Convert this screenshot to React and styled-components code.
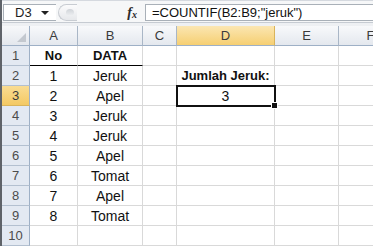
import React from "react";
import styled, { createGlobalStyle, css } from "styled-components";

const GlobalStyle = createGlobalStyle`
  html, body {
    margin: 0;
    padding: 0;
    background: #ffffff;
  }
  body {
    font-family: "Liberation Sans", Arial, sans-serif;
  }
`;

const columns = [
  { key: "A", width: 48 },
  { key: "B", width: 65 },
  { key: "C", width: 34 },
  { key: "D", width: 98 },
  { key: "E", width: 64 },
  { key: "F", width: 64 },
];

const rows = [
  { n: 1, A: "No", B: "DATA", head: true },
  { n: 2, A: "1", B: "Jeruk", D: "Jumlah Jeruk:" },
  { n: 3, A: "2", B: "Apel", D: "3" },
  { n: 4, A: "3", B: "Jeruk" },
  { n: 5, A: "4", B: "Jeruk" },
  { n: 6, A: "5", B: "Apel" },
  { n: 7, A: "6", B: "Tomat" },
  { n: 8, A: "7", B: "Apel" },
  { n: 9, A: "8", B: "Tomat" },
  { n: 10 },
];

function App() {
  return (
    <Window>
      <GlobalStyle />
      <FormulaBar>
        <NameBox>
          <span>D3</span>
          <DropArrow />
        </NameBox>
        <Grabber>
          <GrabDot />
        </Grabber>
        <FxLabel>
          f<small>x</small>
        </FxLabel>
        <FormulaInput>=COUNTIF(B2:B9;"jeruk")</FormulaInput>
      </FormulaBar>

      <Sheet>
        <Corner>
          <CornerTriangle />
        </Corner>
        {columns.map((c) => (
          <ColHeader key={c.key} $active={c.key === "D"}>
            {c.key}
          </ColHeader>
        ))}

        {rows.map((r) => (
          <React.Fragment key={r.n}>
            <RowHeader $active={r.n === 3}>{r.n}</RowHeader>
            {columns.map((c) => {
              const value = r[c.key];
              const selected = r.n === 3 && c.key === "D";
              return (
                <Cell
                  key={c.key}
                  $bold={r.head || (r.n === 2 && c.key === "D")}
                  $underline={r.head && (c.key === "A" || c.key === "B")}
                  $selected={selected}
                >
                  {value}
                  {selected && <FillHandle />}
                </Cell>
              );
            })}
          </React.Fragment>
        ))}
      </Sheet>
    </Window>
  );
}

const Window = styled.div`
  width: 373px;
  height: 246px;
  overflow: hidden;
  box-sizing: border-box;
  border-left: 2px solid #5f6369;
  background: #eef0f3;
  display: flex;
  flex-direction: column;
`;

const FormulaBar = styled.div`
  height: 26px;
  box-sizing: border-box;
  padding: 3px 0 1px 1px;
  display: flex;
  align-items: stretch;
  background: #f6f7f8;
  border-top: 1px solid #d5d9df;
  border-bottom: 1px solid #c6cbd2;
  margin-bottom: 3px;
`;

const NameBox = styled.div`
  width: 53px;
  box-sizing: border-box;
  border: 1px solid #a9b0b8;
  border-right: none;
  background: #ffffff;
  display: flex;
  align-items: center;
  padding-left: 11px;
  font-size: 13px;
  color: #1e1e1e;
  gap: 9px;
`;

const DropArrow = styled.span`
  width: 0;
  height: 0;
  border-left: 4px solid transparent;
  border-right: 4px solid transparent;
  border-top: 4px solid #222;
  margin-top: 1px;
`;

const Grabber = styled.div`
  width: 15px;
  margin-left: 2px;
  border-radius: 10px 0 0 10px;
  border: 1px solid #c8ccd2;
  border-right: none;
  background: linear-gradient(#fbfbfc, #e6e8eb);
  display: flex;
  align-items: center;
  justify-content: flex-end;
  padding-right: 3px;
`;

const GrabDot = styled.span`
  width: 8px;
  height: 7px;
  border-radius: 50%;
  background: linear-gradient(#cfd3d8, #eef0f2);
`;

const FxLabel = styled.div`
  width: 68px;
  box-sizing: border-box;
  padding-right: 8px;
  display: flex;
  align-items: center;
  justify-content: flex-end;
  font-family: "Liberation Serif", "Times New Roman", serif;
  font-style: italic;
  font-weight: bold;
  font-size: 14px;
  color: #2a2a2a;

  small {
    font-size: 10px;
    margin-top: 3px;
  }
`;

const FormulaInput = styled.div`
  flex: 1;
  box-sizing: border-box;
  border: 1px solid #a9b0b8;
  border-right: none;
  background: #ffffff;
  display: flex;
  align-items: center;
  padding-left: 6px;
  font-size: 13px;
  color: #111;
  white-space: nowrap;
`;

const Sheet = styled.div`
  display: grid;
  grid-template-columns: 28px ${columns.map((c) => `${c.width}px`).join(" ")};
  grid-auto-rows: 20px;
  background: #ffffff;
`;

const headerBase = css`
  box-sizing: border-box;
  display: flex;
  align-items: center;
  justify-content: center;
  font-size: 13px;
  color: #3b3b3b;
`;

const Corner = styled.div`
  ${headerBase};
  position: relative;
  background: linear-gradient(#f7f8fa, #e3e7ed);
  border-right: 1px solid #9eb0c6;
  border-bottom: 1px solid #9eb0c6;
`;

const CornerTriangle = styled.span`
  position: absolute;
  right: 3px;
  bottom: 3px;
  width: 0;
  height: 0;
  border-left: 9px solid transparent;
  border-bottom: 9px solid #c3c8cf;
`;

const ColHeader = styled.div`
  ${headerBase};
  background: ${({ $active }) =>
    $active
      ? "linear-gradient(#fbe6b2, #f6cf72)"
      : "linear-gradient(#f8f9fb, #e4e8ee)"};
  border-right: 1px solid ${({ $active }) => ($active ? "#d9b45b" : "#a9b6c6")};
  border-bottom: 1px solid #9eb0c6;
`;

const RowHeader = styled.div`
  ${headerBase};
  background: ${({ $active }) =>
    $active ? "linear-gradient(#f9dc93, #f4c963)" : "#e3e9f2"};
  border-right: 1px solid #9eb0c6;
  border-bottom: 1px solid ${({ $active }) => ($active ? "#d9b45b" : "#b3c0d0")};
  color: ${({ $active }) => ($active ? "#3b3b3b" : "#4c4c4c")};
`;

const Cell = styled.div`
  position: relative;
  box-sizing: border-box;
  display: flex;
  align-items: center;
  justify-content: center;
  white-space: nowrap;
  font-size: ${({ $bold }) => ($bold ? "13px" : "14px")};
  font-weight: ${({ $bold }) => ($bold ? "bold" : "normal")};
  color: #111;
  border-right: 1px solid #d9d9d9;
  border-bottom: 1px solid ${({ $underline }) => ($underline ? "#000" : "#d9d9d9")};

  ${({ $selected }) =>
    $selected &&
    css`
      outline: 2px solid #111;
      outline-offset: -1px;
      z-index: 1;
    `}
`;

const FillHandle = styled.span`
  position: absolute;
  right: -4px;
  bottom: -4px;
  width: 5px;
  height: 5px;
  background: #111;
  border: 1px solid #fff;
`;

export default App;
